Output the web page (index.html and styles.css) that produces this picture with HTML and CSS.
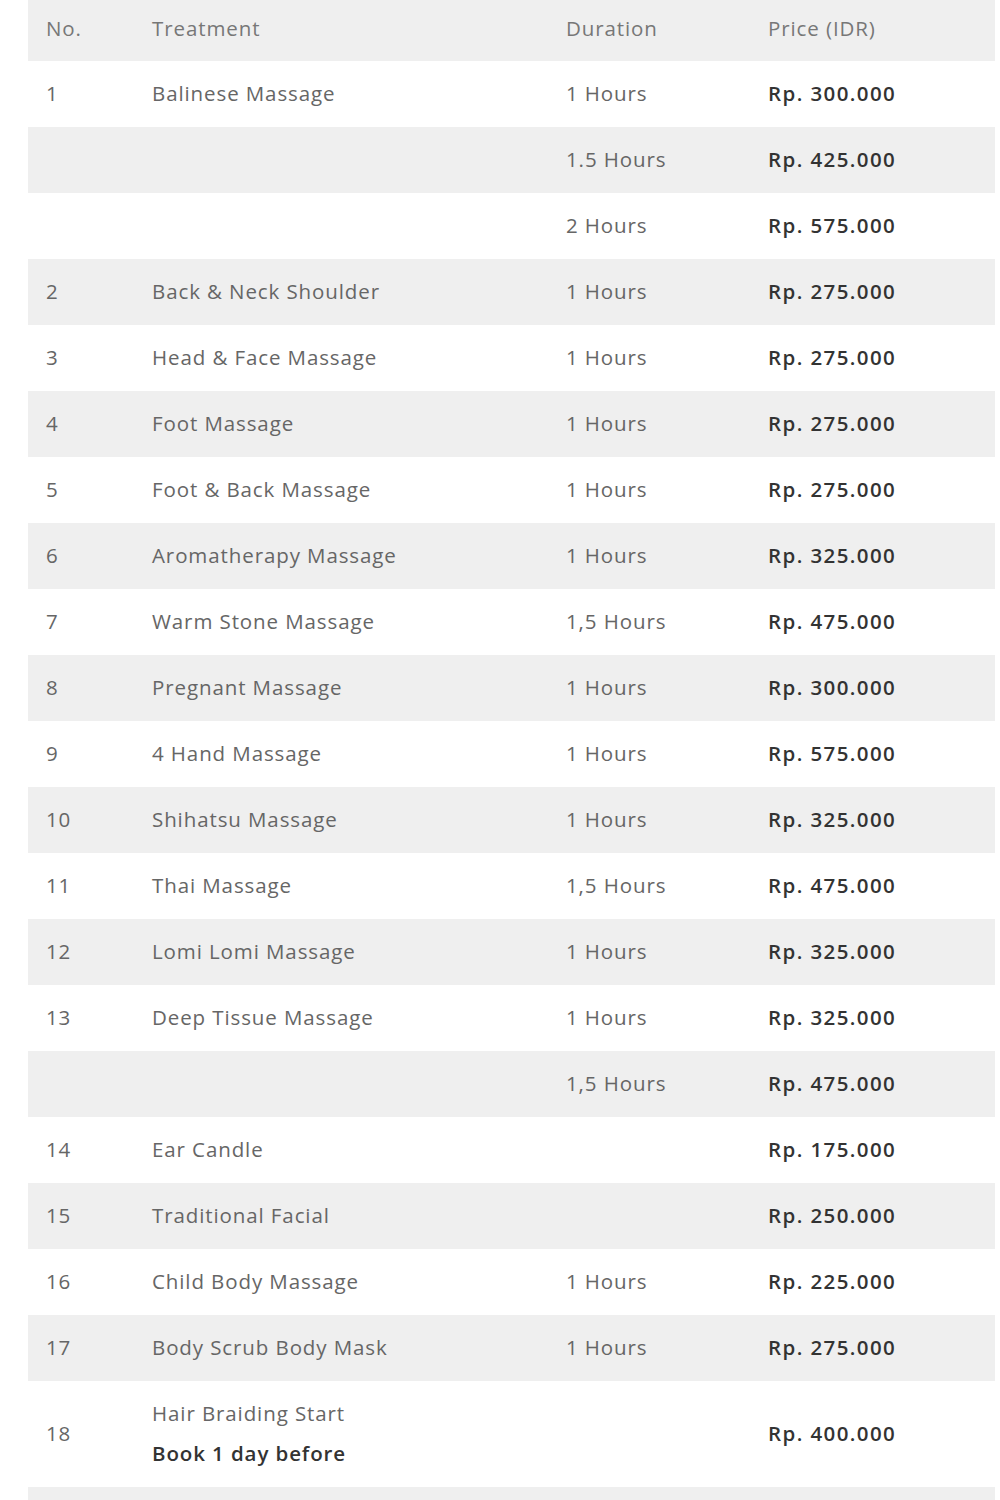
FILE: index.html
```html
<!DOCTYPE html>
<html lang="en">
<head>
<meta charset="utf-8">
<title>Price List</title>
<link rel="stylesheet" href="styles.css">
</head>
<body>
<table class="price-table">
  <thead>
    <tr><th class="c-no">No.</th><th class="c-name">Treatment</th><th class="c-dur">Duration</th><th class="c-price">Price (IDR)</th></tr>
  </thead>
  <tbody>
    <tr><td>1</td><td>Balinese Massage</td><td>1 Hours</td><td class="price">Rp. 300.000</td></tr>
    <tr><td></td><td></td><td>1.5 Hours</td><td class="price">Rp. 425.000</td></tr>
    <tr><td></td><td></td><td>2 Hours</td><td class="price">Rp. 575.000</td></tr>
    <tr><td>2</td><td>Back &amp; Neck Shoulder</td><td>1 Hours</td><td class="price">Rp. 275.000</td></tr>
    <tr><td>3</td><td>Head &amp; Face Massage</td><td>1 Hours</td><td class="price">Rp. 275.000</td></tr>
    <tr><td>4</td><td>Foot Massage</td><td>1 Hours</td><td class="price">Rp. 275.000</td></tr>
    <tr><td>5</td><td>Foot &amp; Back Massage</td><td>1 Hours</td><td class="price">Rp. 275.000</td></tr>
    <tr><td>6</td><td>Aromatherapy Massage</td><td>1 Hours</td><td class="price">Rp. 325.000</td></tr>
    <tr><td>7</td><td>Warm Stone Massage</td><td>1,5 Hours</td><td class="price">Rp. 475.000</td></tr>
    <tr><td>8</td><td>Pregnant Massage</td><td>1 Hours</td><td class="price">Rp. 300.000</td></tr>
    <tr><td>9</td><td>4 Hand Massage</td><td>1 Hours</td><td class="price">Rp. 575.000</td></tr>
    <tr><td>10</td><td>Shihatsu Massage</td><td>1 Hours</td><td class="price">Rp. 325.000</td></tr>
    <tr><td>11</td><td>Thai Massage</td><td>1,5 Hours</td><td class="price">Rp. 475.000</td></tr>
    <tr><td>12</td><td>Lomi Lomi Massage</td><td>1 Hours</td><td class="price">Rp. 325.000</td></tr>
    <tr><td>13</td><td>Deep Tissue Massage</td><td>1 Hours</td><td class="price">Rp. 325.000</td></tr>
    <tr><td></td><td></td><td>1,5 Hours</td><td class="price">Rp. 475.000</td></tr>
    <tr><td>14</td><td>Ear Candle</td><td></td><td class="price">Rp. 175.000</td></tr>
    <tr><td>15</td><td>Traditional Facial</td><td></td><td class="price">Rp. 250.000</td></tr>
    <tr><td>16</td><td>Child Body Massage</td><td>1 Hours</td><td class="price">Rp. 225.000</td></tr>
    <tr><td>17</td><td>Body Scrub Body Mask</td><td>1 Hours</td><td class="price">Rp. 275.000</td></tr>
    <tr class="tall"><td>18</td><td>Hair Braiding Start<br><strong class="note">Book 1 day before</strong></td><td></td><td class="price">Rp. 400.000</td></tr>
    <tr><td></td><td></td><td></td><td></td></tr>
  </tbody>
</table>
</body>
</html>
```

FILE: styles.css
```css
html, body {
  margin: 0;
  padding: 0;
  background: #ffffff;
}

body {
  font-family: "Open Sans", "Noto Sans", sans-serif;
  color: #666666;
  font-size: 20.5px;
  letter-spacing: 0.9px;
}

.price-table {
  margin-left: 28px;
  width: 967px;
  border-collapse: collapse;
  table-layout: fixed;
}

.price-table th,
.price-table td {
  box-sizing: border-box;
  text-align: left;
  padding: 12px 0 14px 18px;
  line-height: 40px;
  vertical-align: middle;
  white-space: nowrap;
}

.c-no { width: 106px; }
.c-name { width: 414px; }
.c-dur { width: 202px; }
.c-price { width: 245px; }

.price-table th {
  font-weight: 400;
  color: #777777;
  height: 61px;
  padding-top: 8px;
  padding-bottom: 13px;
  background: #efefef;
}

.price-table tbody tr:nth-child(even) {
  background: #efefef;
}

.price-table td {
  height: 66px;
}

.price-table td.price {
  font-weight: 600;
  color: #333333;
  letter-spacing: 1.4px;
}

.price-table .tall td {
  height: 106px;
}

.note {
  font-weight: 600;
  color: #333333;
}
```
